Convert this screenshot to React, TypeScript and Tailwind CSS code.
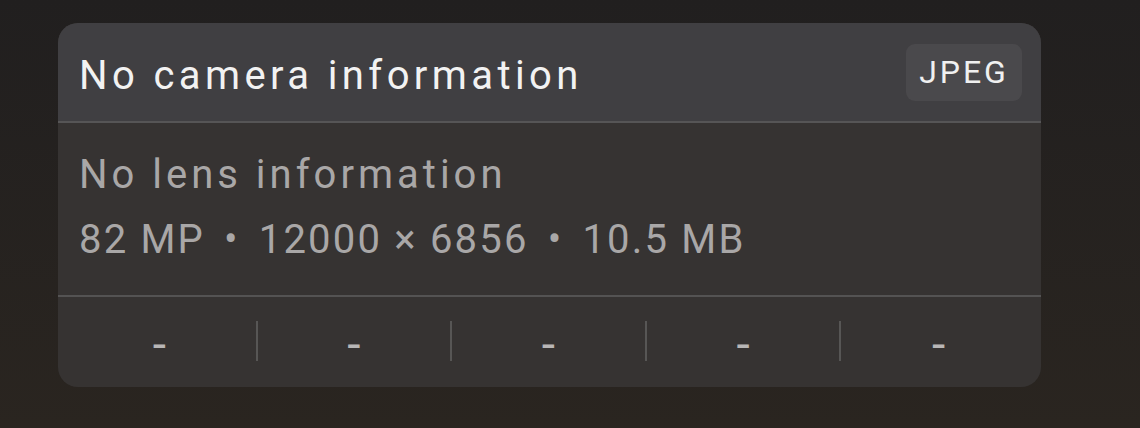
import React from "react";

export default function App() {
  const cols = [0, 1, 2, 3, 4];
  return (
    <div
      className="w-[1140px] h-[428px] bg-gradient-to-b from-[#211f1f] to-[#2a2520] pt-[23px] pl-[58px]"
      style={{ fontFamily: "Roboto, 'Noto Sans', sans-serif" }}
    >
      <div className="w-[983px] h-[364px] rounded-[20px] overflow-hidden bg-[#363332] flex flex-col">
        <div className="h-[100px] bg-[#403f42] flex items-center justify-between pl-[21px] pr-[19px] border-b-2 border-[#565556]">
          <span className="text-[40px] leading-[48px] text-[#f2f2f2] tracking-[0.11em] pt-[7px]">
            No camera information
          </span>
          <span className="h-[57px] w-[116px] rounded-[9px] bg-[#4a494c] flex items-center justify-center text-[32px] text-[#f0f0f0] tracking-[0.09em]">
            JPEG
          </span>
        </div>
        <div className="pl-[21px] pt-[28px] pb-[31px] flex flex-col gap-[17px] border-b-2 border-[#545353]">
          <span className="text-[40px] leading-[48px] text-[#a9a7a7] tracking-[0.1em]">
            No lens information
          </span>
          <span className="text-[40px] leading-[48px] text-[#a9a7a7] tracking-[0.055em] flex items-center">
            <span>82 MP</span>
            <span className="mx-[19px]">•</span>
            <span>12000 × 6856</span>
            <span className="mx-[19px]">•</span>
            <span>10.5 MB</span>
          </span>
        </div>
        <div className="flex-1 flex items-center px-[5px] pb-[3px]">
          {cols.map((i) => (
            <div key={i} className="flex-1 flex items-center h-[40px]">
              <div className="flex-1 flex justify-center text-[48px] leading-[40px] text-[#b8b6b6] pt-[8px]">
                -
              </div>
              {i < 4 && <div className="w-[2px] h-[40px] bg-[#575655]" />}
            </div>
          ))}
        </div>
      </div>
    </div>
  );
}
